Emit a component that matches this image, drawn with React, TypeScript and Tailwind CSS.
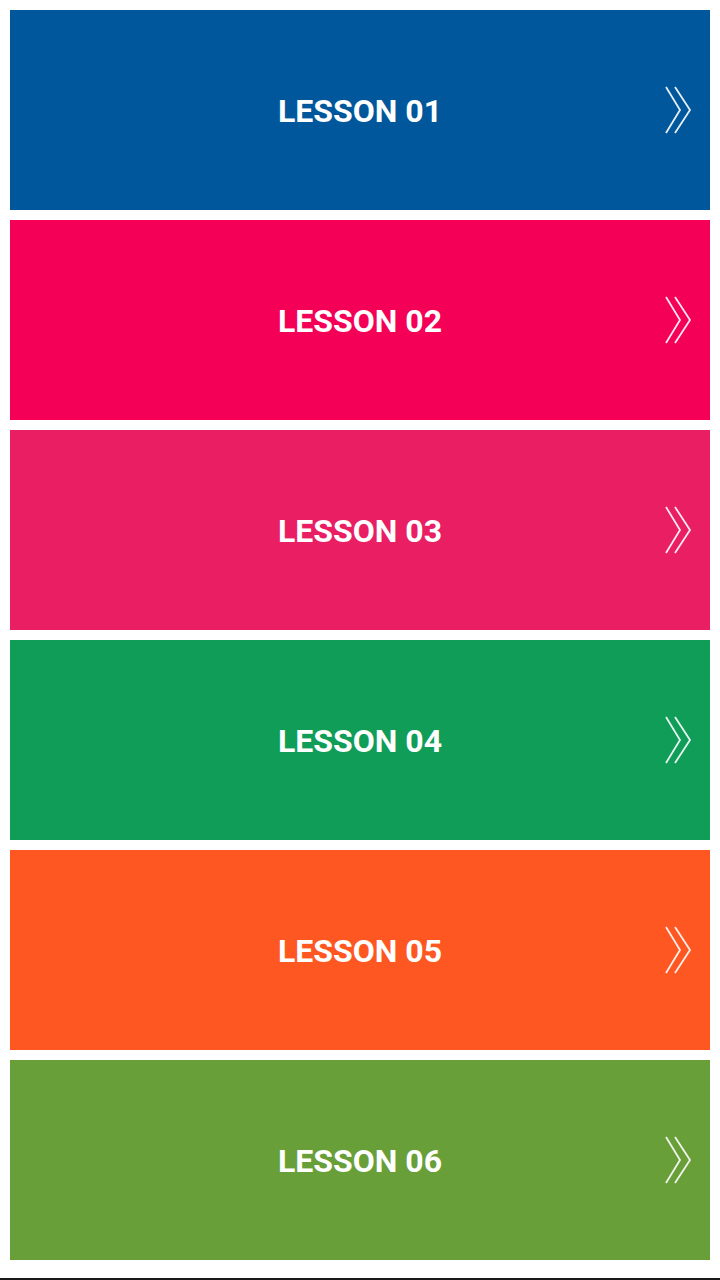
import React from 'react';

const lessons = [
  { title: 'LESSON 01', color: 'bg-[#01579b]' },
  { title: 'LESSON 02', color: 'bg-[#f50057]' },
  { title: 'LESSON 03', color: 'bg-[#e91e63]' },
  { title: 'LESSON 04', color: 'bg-[#0f9d58]' },
  { title: 'LESSON 05', color: 'bg-[#ff5722]' },
  { title: 'LESSON 06', color: 'bg-[#689f38]' },
];

// double chevron drawn thin, like the original asset
const Chevrons: React.FC = () => (
  <svg width="30" height="50" viewBox="0 0 30 50" fill="none" className="text-white/90">
    <polyline points="2,2 16,25 2,48" stroke="currentColor" strokeWidth="1.8" />
    <polyline points="11,2 26,25 11,48" stroke="currentColor" strokeWidth="1.8" />
  </svg>
);

const App: React.FC = () => {
  return (
    <div
      className="h-[1280px] bg-white flex flex-col border-b-2 border-[#1a1a1a]"
      style={{ fontFamily: 'Roboto, "Liberation Sans", sans-serif' }}
    >
      <div className="flex flex-col gap-[10px] p-[10px]">
        {lessons.map((l) => (
          <button
            key={l.title}
            className={`${l.color} h-[200px] w-full flex items-center relative`}
          >
            <span className="flex-1 text-center text-white font-bold text-[32px] leading-none pt-[2px]">
              {l.title}
            </span>
            <span className="absolute right-[16px] top-1/2 -translate-y-1/2 flex">
              <Chevrons />
            </span>
          </button>
        ))}
      </div>
    </div>
  );
};

export default App;
